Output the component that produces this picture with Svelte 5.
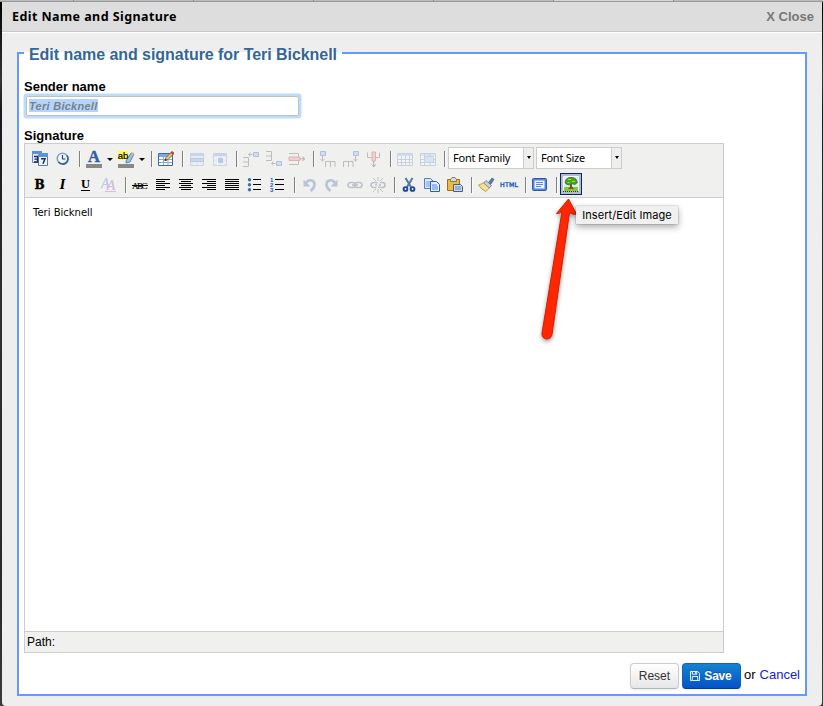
<script lang="ts">
	type Item = { icon: string; off?: boolean; split?: boolean; active?: boolean; title?: string };

	let senderName = $state("Teri Bicknell");

	const grid = `<path d="M.5 2.5h15v12H.5z" fill="#fff" stroke="#6d8fc4"/><path d="M1 3h14v2H1z" fill="#8fb0e6"/><path d="M1 8.5h14M1 11.5h14M4.5 5v9M8.500 5v9M12.5 5v9" stroke="#6f91c8"/>`;
	const panel = `<path d="M1.5 2.5h13v12h-13z" fill="#d8e4fa" stroke="#7f9fd2"/><path d="M1 2h14v3H1z" fill="#6f9be0"/>`;
	const cell = (x: number, y: number) =>
		`<path d="M${x}.5 ${y}.5h5v4h-5z" fill="#8fb4ff" stroke="#3c5a95"/>`;
	const lines = (rows: number[][]) =>
		rows.map(([x, w], i) => `<path d="M${x} ${2.5 + i * 2}h${w}" stroke="#000"/>`).join("");
	const undo = `<path d="M2.500 2.500v7h7z" fill="#4668b7"/><path d="M5 6C8 1.500 14 3 13.500 8c-.3 3-2 4.500-4 6" fill="none" stroke="#4668b7" stroke-width="2.600"/>`;
	const link = `<rect x="1" y="5.500" width="7.500" height="5" rx="2.500" fill="none" stroke="#59627a" stroke-width="1.700"/><rect x="7.500" y="5.500" width="7.500" height="5" rx="2.500" fill="none" stroke="#59627a" stroke-width="1.700"/><path d="M5 8h6" stroke="#59627a" stroke-width="1.700"/>`;

	const icons: Record<string, string> = {
		date: `<path d="M.5.500h9v11h-9z" fill="#e6effd" stroke="#6388c5"/><path d="M0 0h10v3H0z" fill="#5a8ee0"/><path d="M6.500 2.500h9v12h-9z" fill="#eef5ff" stroke="#5179bb"/><path d="M6 2h10v4H6z" fill="#5b91df"/><path d="M2 5.500h3.500v5.500H2M2.500 8.200h3" fill="none" stroke="#1d2d4d" stroke-width="1.300"/><path d="M9 7.700h4l-2 5" fill="none" stroke="#1d2d4d" stroke-width="1.500"/>`,
		time: `<circle cx="7.500" cy="7.500" r="5.300" fill="#f2f7ff" stroke="#7ba0dd" stroke-width="1.500"/><path d="M12 4.500a5.300 5.300 0 0 1-8.500 6.500" fill="none" stroke="#3a5f9f" stroke-width="1.600"/><path d="M7.500 4v4h3" fill="none" stroke="#24436f" stroke-width="1.200"/>`,
		color: `<text x="8" y="11" text-anchor="middle" font-family="Liberation Serif, serif" font-size="16.500" font-weight="700" fill="#315d9e" stroke="#315d9e" stroke-width=".4">A</text><path d="M0 13h16v4H0z" fill="#888"/>`,
		highlight: `<path d="M0 0h10v9H0z" fill="#ffff35"/><path d="M8 10l5-8 3 1-4 8-4 1z" fill="#9cc0ea" stroke="#496b9c" stroke-width=".8"/><path d="M13 2l2-1 1 2-1 1z" fill="#e7c35c"/><text x="-.3" y="7.500" font-family="Liberation Sans, sans-serif" font-size="9.500" fill="#000" stroke="#000" stroke-width=".2">ab</text><path d="M0 13h16v4H0z" fill="#888"/>`,
		table: `<path d="M.5 2.500h14v12H.5z" fill="#fff" stroke="#3f68aa"/><path d="M1 3h13v3H1z" fill="#79a9ed"/><path d="M1 8.500h13M1 11.500h13M5.500 6v8M10 6v8" stroke="#87a9d8"/><path d="M7 9.500l1-3 5.500-5.500 2 2L10 8.500z" fill="#f0c85a" stroke="#68553b" stroke-width=".8"/><path d="M12.500 1.500L14 0l2 1.500v1L14.800 4z" fill="#b5453c"/><path d="M6.500 10l.8-2.500 1.700 1.700z" fill="#222"/>`,
		rowProps: panel + `<path d="M2 10.500h12M5.500 11v3M10.500 11v3" stroke="#fff"/><path d="M1.500 7.500h13v3h-13z" fill="#7ba8f2" stroke="#4c78c4"/>`,
		cellProps: panel + `<path d="M2 7.500h12M2 11.500h12M5.500 5v9M10.500 5v9" stroke="#fff"/><path d="M6 7h5v5H6z" fill="#477ddd"/>`,
		rowBefore: cell(10, 1) + `<path d="M9.500 3.500h-4M7.500 1.500l-2 2 2 2M0 6.500h5.500v9H0M0 11h5.500" fill="none" stroke="#555"/>`,
		rowAfter: cell(10, 10) + `<path d="M9.500 12.500h-4M7.500 10.500l-2 2 2 2M0 .500h5.500v9H0M0 5h5.500" fill="none" stroke="#555"/>`,
		deleteRow: `<path d="M0 2.500h9.500v11H0" fill="none" stroke="#555"/><path d="M0 6h11v3.500H0z" fill="#ff8a8a" stroke="#bc3535"/><path d="M11 7.800h5M13.500 5.500l2 2.300-2 2.300" fill="none" stroke="#222"/>`,
		colBefore: cell(0, 0) + `<path d="M2.500 5v5.500M.5 8l2 2 2-2M5.500 16v-5.500h9.500V16M10.500 10.500V16" fill="none" stroke="#555"/>`,
		colAfter: cell(10, 0) + `<path d="M12.500 5v5.500M10.500 8l2 2 2-2M.5 16v-5.500h9.500V16M5.500 10.500V16" fill="none" stroke="#555"/>`,
		deleteCol: `<path d="M1.500 1.500v5h12v-5" fill="none" stroke="#555"/><path d="M6 1h3.500v9H6z" fill="#ff8a8a" stroke="#bc3535"/><path d="M7.700 10v6M5.500 13.500l2.200 2 2.300-2" fill="none" stroke="#222"/>`,
		split: grid,
		merge: `<path d="M.5 2.500h15v12H.5z" fill="#fff" stroke="#6d8fc4"/><path d="M1 3h14v2H1z" fill="#b8cdee"/><path d="M4.500 5.500h9v6h-9z" fill="#a8c8f8" stroke="#6f91c8"/><path d="M1 8.500h3M1 11.500h3M13 8.500h2M13 11.500h2M4.500 2v3M10 2v3M4.500 12v2M10 12v2" stroke="#6f91c8"/>`,
		bold: `<text x="7.500" y="12" text-anchor="middle" font-family="DejaVu Serif, serif" font-size="12" font-weight="700" stroke="#000" stroke-width=".4">B</text>`,
		italic: `<text x="7.500" y="12" text-anchor="middle" font-family="DejaVu Serif, serif" font-size="12" font-style="italic" font-weight="700">I</text>`,
		underline: `<text x="7.500" y="11" text-anchor="middle" font-family="Liberation Serif, serif" font-size="12.500" font-weight="700">U</text><path d="M3 13.500h9" stroke="#000"/>`,
		style: `<text x="0" y="10.500" font-family="Liberation Serif, serif" font-size="14" font-style="italic" font-weight="700" fill="#5c76c8">A<tspan dx="-3.500" dy="2" fill="#9a58bb">A</tspan></text><path d="M4 14.500h11" stroke="#9a58bb"/>`,
		strike: `<text x="0" y="11.500" textLength="15.500" font-family="Liberation Serif, serif" font-size="9" stroke="#000" stroke-width=".15">ABC</text><path d="M0 8.500h16" stroke="#000"/>`,
		left: lines([[1, 14], [1, 9], [1, 14], [1, 9], [1, 14], [1, 9]]),
		center: lines([[1, 14], [3, 10], [1, 14], [3, 10], [1, 14], [3, 10]]),
		right: lines([[1, 14], [6, 9], [1, 14], [6, 9], [1, 14], [6, 9]]),
		full: lines([[1, 14], [1, 14], [1, 14], [1, 14], [1, 14], [1, 14]]),
		bullets: `<circle cx="2.500" cy="2.800" r="1.700" fill="#416cae"/><circle cx="2.500" cy="7.800" r="1.700" fill="#416cae"/><circle cx="2.500" cy="12.800" r="1.700" fill="#416cae"/><path d="M6 2.500h8M6 7.500h8M6 12.500h8" stroke="#000"/>`,
		numbers: `<g font-family="Liberation Sans, sans-serif" font-size="6" font-weight="700" fill="#285bb5"><text x="0" y="5">1</text><text x="0" y="10">2</text><text x="0" y="15">3</text></g><path d="M5 2.500h9M5 7.500h9M5 12.500h9" stroke="#000"/>`,
		undo,
		redo: `<g transform="translate(16 0) scale(-1 1)">${undo}</g>`,
		link,
		unlink: link + `<path d="M7 11.500L9 4.500" stroke="#eee" stroke-width="2"/><path d="M8 0v4M3 1l3 3M13 1l-3 3M8 12v4M3 15l3-3M13 15l-3-3" stroke="#59627a"/>`,
		cut: `<path d="M4.500 1l5.500 9M11.500 1L6 10" stroke="#5278aa" stroke-width="2"/><circle cx="4.500" cy="12" r="1.900" fill="none" stroke="#1b4795" stroke-width="1.900"/><circle cx="11.500" cy="12" r="1.900" fill="none" stroke="#1b4795" stroke-width="1.900"/>`,
		copy: `<path d="M.5 1.500h6l3 3v7h-9z" fill="#dbe9ff" stroke="#517fc2"/><path d="M2 5h5M2 7h5M2 9h5" stroke="#6fa1e6"/><path d="M6.500 4.500h6l3 3v7h-9z" fill="#e4efff" stroke="#2e60a9"/><path d="M8 8h5M8 10h6M8 12h6" stroke="#4e89dc"/>`,
		paste: `<path d="M.5 2.500h12v11H.5z" fill="#eebc3c" stroke="#9a7027"/><path d="M3.500 4.500v-2l1.500-2h3l1.500 2v2z" fill="#ddd9c8" stroke="#796843" stroke-width=".8"/><path d="M6.500 7.500h7l2 2v5h-9z" fill="#c8d8f2" stroke="#4d5e7c"/><path d="M8 10h6M8 12h6" stroke="#6989b8"/>`,
		brush: `<path d="M10.500 5.500l3.500-4.500 2 1.500-3.500 5z" fill="#5b7cae" stroke="#385b88" stroke-width=".7"/><path d="M8 3.500l5.500 5-2.200 2.500-5.600-5z" fill="#c6ced8" stroke="#5d6875" stroke-width=".7"/><path d="M5.500 6l5.700 5L8 14.500Q3.500 13 .5 8z" fill="#f3d88c" stroke="#a9863a" stroke-width=".7"/><path d="M3 8l5 5M5 7l4.500 4.500" stroke="#fff1bd" stroke-width=".8"/>`,
		html: `<text x="-1" y="10" textLength="18" lengthAdjust="spacing" font-family="DejaVu Sans, sans-serif" font-size="6.300" fill="#205ab9" stroke="#205ab9" stroke-width=".35">HTML</text>`,
		fullscreen: `<rect x=".5" y="1.500" width="14" height="12" rx="1" fill="#4e87dc" stroke="#315da6"/><path d="M2.500 3.500h10v8h-10z" fill="#edf5ff"/><path d="M4 5.500h7M4 7.500h7M4 9.500h5" stroke="#5b8bcc"/>`,
		image: `<path d="M.5.500h15v14H.5z" fill="#d3f1ff" stroke="#fff"/><path d="M1 11h14v4H1z" fill="#83cc2e"/><path d="M7 7.500h2v3l2 2.500H5l2-2.500z" fill="#8a4c18"/><path d="M2 6l1-2.500L6 1.500h4l3 1.500 1.500 3.500L12 8.500 9 7.700 6 9 3 8z" fill="#4aa51e" stroke="#2a6f14" stroke-width=".7"/><path d="M5 3.500h3M9 5.500h3M4.500 6.500h2" stroke="#a5df3c"/><path d="M0 15.500h16" stroke="#173f16" stroke-dasharray="1 1"/>`,
	};

	const off = (...names: string[]): Item[] => names.map((icon) => ({ icon, off: true }));
	const on = (...names: string[]): Item[] => names.map((icon) => ({ icon }));

	const rowOne: Item[][] = [
		on("date", "time"),
		[{ icon: "color", split: true }, { icon: "highlight", split: true }],
		on("table"),
		off("rowProps", "cellProps"),
		off("rowBefore", "rowAfter", "deleteRow"),
		off("colBefore", "colAfter", "deleteCol"),
		off("split", "merge"),
	];

	const rowTwo: Item[][] = [
		[...on("bold", "italic", "underline"), ...off("style")],
		on("strike", "left", "center", "right", "full", "bullets", "numbers"),
		off("undo", "redo", "link", "unlink"),
		on("cut", "copy", "paste"),
		on("brush", "html"),
		on("fullscreen"),
		[{ icon: "image", active: true, title: "Insert/Edit Image" }],
	];
</script>

{#snippet tool(item: Item)}
	<button class="tool" class:split={item.split} class:off={item.off} class:active={item.active} aria-label={item.title ?? item.icon}>
		<svg width="16" height="16" viewBox="0 0 16 16">{@html icons[item.icon]}</svg>
		{#if item.split}<span class="caret"></span>{/if}
	</button>
{/snippet}

<div class="page">
	<div class="tabs"><i></i><i></i><i></i><i></i><i></i><i></i></div>
	<div class="dialog">
		<header>
			<h1>Edit Name and Signature</h1>
			<span class="close">X Close</span>
		</header>
		<fieldset>
			<legend>Edit name and signature for Teri Bicknell</legend>
			<div class="label">Sender name</div>
			<div class="name-field"><span>{senderName}</span></div>
			<div class="label second">Signature</div>

			<div class="editor">
				<div class="toolbar">
					<div class="row">
						{#each rowOne as group}
							{#each group as item}{@render tool(item)}{/each}
							<span class="sep"></span>
						{/each}
						<div class="select"><span class="family">Font Family</span><b><span class="caret"></span></b></div>
						<div class="select"><span class="size">Font Size</span><b><span class="caret"></span></b></div>
					</div>
					<div class="row">
						{#each rowTwo as group, i}
							{#if i > 0}<span class="sep"></span>{/if}
							{#each group as item}{@render tool(item)}{/each}
						{/each}
					</div>
				</div>
				<div class="content">Teri Bicknell</div>
				<div class="status">Path:</div>
			</div>

			<div class="actions">
				<button class="btn reset">Reset</button>
				<button class="btn save">
					<svg width="10" height="10" viewBox="0 0 11 11" fill="none" stroke="#fff"><path d="M.5.5h8l2 2v8H.5zM2.500.5v3h5v-3M2.500 10V6h6v4M6 1v2" /></svg>
					Save
				</button>
				<span class="or">or</span>
				<a href="#cancel">Cancel</a>
			</div>
		</fieldset>
	</div>

	<svg class="pointer" width="50" height="155" viewBox="535 192 50 155">
		<path d="M568.500 199L576.500 214Q574 215.500 569.500 212.500L552 334.500Q551 339 546.500 339Q541.500 338 542 333L562 211.500Q558 214.500 556.500 213.500Z" />
	</svg>
	<div class="tooltip">Insert/Edit Image</div>
</div>

<style>
	:global(body) {
		margin: 0;
		overflow: hidden;
	}

	.page {
		position: relative;
		box-sizing: border-box;
		width: 823px;
		height: 706px;
		padding-right: 1px;
		background: linear-gradient(#000 0, #141414 30px, #363636 80px, #17191f 110px, #303030 300px, #292929 600px, #3b3b3b);
		font-family: "Liberation Sans", Arial, sans-serif;
		color: #000;
	}

	.tabs {
		display: flex;
		box-sizing: border-box;
		width: 823px;
		height: 2px;
		padding-left: 73px;
		background: linear-gradient(90deg, #bbb 554px, #d6d6d6 554px, #d6d6d6 674px, #bbb 674px);
		border-bottom: 1px solid #999;
	}

	.tabs i {
		width: 119px;
		border-left: 1px solid #888;
	}

	.dialog {
		box-sizing: border-box;
		height: 704px;
		margin-left: 2px;
		background: #eee;
		border-radius: 0 0 4px 4px;
	}

	header {
		display: flex;
		align-items: center;
		justify-content: space-between;
		box-sizing: border-box;
		height: 30px;
		padding: 0 8px 0 10px;
		background: #ddd;
		border-bottom: 1px solid #c8c8c8;
		box-shadow: 0 1px #fff;
	}

	h1 {
		margin: 0;
		font: 700 12.5px "Noto Sans", "Open Sans", sans-serif;
		letter-spacing: 0.43px;
	}

	.close {
		font-size: 13px;
		font-weight: 700;
		color: #777;
	}

	fieldset {
		box-sizing: border-box;
		width: 790px;
		height: 652px;
		margin: 12px 15px 0;
		padding: 0 5px;
		border: 2px solid #69f;
		background: #fff;
	}

	legend {
		padding: 2px 5px 0;
		height: 16px;
		font-size: 16px;
		font-weight: 700;
		line-height: 18px;
		letter-spacing: -0.05px;
		color: #369;
	}

	.label {
		margin-top: 17px;
		height: 16px;
		font-size: 13px;
		font-weight: 700;
		line-height: 16px;
	}

	.label.second {
		margin-top: 12px;
		height: 15px;
	}

	.name-field {
		display: flex;
		box-sizing: border-box;
		width: 273px;
		height: 20px;
		margin: 1px 0 0 2px;
		padding: 2px;
		border: 1px solid #c0c0c0;
		border-radius: 1px;
		box-shadow: 0 0 0 2.5px #bbdcfd;
	}

	.name-field span {
		height: 13px;
		background: #b3d5fd;
		color: #7b8188;
		font-size: 11px;
		font-style: italic;
		font-weight: 700;
		line-height: 14px;
		letter-spacing: 0.27px;
	}

	.editor {
		display: flex;
		flex-direction: column;
		box-sizing: border-box;
		width: 700px;
		height: 510px;
		border: 1px solid #ccc;
	}

	.toolbar {
		box-sizing: border-box;
		height: 54px;
		padding: 2px 0 0 4px;
		background: #f0f0ee;
		border-bottom: 1px solid #ccc;
	}

	.row {
		display: flex;
		align-items: center;
		height: 26px;
	}

	.tool {
		display: flex;
		align-items: center;
		box-sizing: border-box;
		width: 23px;
		height: 22px;
		padding: 0 3px;
		border: 0;
		background: none;
		flex: none;
	}

	.tool svg {
		flex: none;
		overflow: visible;
	}

	.tool.split {
		width: 32px;
	}

	.tool.off svg {
		opacity: 0.32;
	}

	.tool.active {
		width: 22px;
		padding: 0 2px;
		margin-bottom: 2px;
		border: 1px solid #0a246a;
		background: #b2bbd0;
	}

	.caret {
		border: 3px solid transparent;
		border-top-color: #000;
		border-bottom: 0;
	}

	.split .caret {
		margin-left: 5px;
	}

	.sep {
		width: 1px;
		height: 16px;
		margin: 0 3px 0 4px;
		background: #808080;
		box-shadow: 1px 1px #fafafa;
		flex: none;
	}

	.select {
		display: flex;
		align-items: center;
		box-sizing: border-box;
		width: 86px;
		height: 22px;
		margin: -3px 2px 0 0;
		border: 1px solid #ccc;
		background: #fff;
		font: 11px "Noto Sans", "Open Sans", sans-serif;
		flex: none;
	}

	.select > span {
		flex: 1;
		padding-left: 4px;
		white-space: nowrap;
	}

	.family {
		letter-spacing: -0.2px;
	}

	.size {
		letter-spacing: -0.25px;
	}

	.select b {
		display: flex;
		align-items: center;
		justify-content: center;
		width: 9px;
		height: 20px;
		background: #eee;
		border-left: 1px solid #ccc;
	}

	.select .caret {
		border-width: 3px 2.5px 0;
	}

	.content {
		flex: 1;
		padding: 8px;
		font: 10px/13px "DejaVu Sans", Verdana, sans-serif;
	}

	.status {
		height: 20px;
		padding-left: 2px;
		background: #f0f0ee;
		border-top: 1px solid #ccc;
		font-size: 12px;
		line-height: 20px;
	}

	.actions {
		display: flex;
		justify-content: flex-end;
		gap: 3px;
		margin-top: 10px;
		font-size: 13px;
		line-height: 23px;
	}

	.or {
		margin-right: 1px;
	}

	.btn {
		display: flex;
		align-items: center;
		justify-content: center;
		gap: 4px;
		box-sizing: border-box;
		height: 26px;
		padding: 0;
		border: 1px solid #ccc;
		border-bottom-color: #b3b3b3;
		border-radius: 4px;
		font: 12px "Liberation Sans", Arial, sans-serif;
		box-shadow: 0 1px 2px rgba(0, 0, 0, 0.08);
	}

	.reset {
		width: 49px;
		color: #333;
		background: linear-gradient(#fff, #e6e6e6);
	}

	.save {
		width: 59px;
		padding-right: 1px;
		color: #fff;
		font-weight: 700;
		letter-spacing: -0.2px;
		border-color: #0b66bd #0b66bd #003d91;
		background: linear-gradient(#1683cf, #0452c9);
		text-shadow: 0 -1px rgba(0, 0, 0, 0.25);
	}

	.actions a {
		color: #1122dd;
		text-decoration: none;
	}

	.pointer {
		position: absolute;
		left: 535px;
		top: 192px;
		filter: drop-shadow(0 2px 2px rgba(0, 0, 0, 0.4));
	}

	.pointer path {
		fill: #ff2600;
		stroke: #cf2108;
	}

	.tooltip {
		position: absolute;
		left: 576px;
		top: 206px;
		box-sizing: border-box;
		width: 102px;
		height: 18px;
		background: #f0f0f0;
		box-shadow: 0 0 1px rgba(0, 0, 0, 0.5), 0 3px 7px rgba(0, 0, 0, 0.35);
		font: 11px/18px Inter, sans-serif;
		letter-spacing: 0.08px;
		text-align: center;
	}
</style>
